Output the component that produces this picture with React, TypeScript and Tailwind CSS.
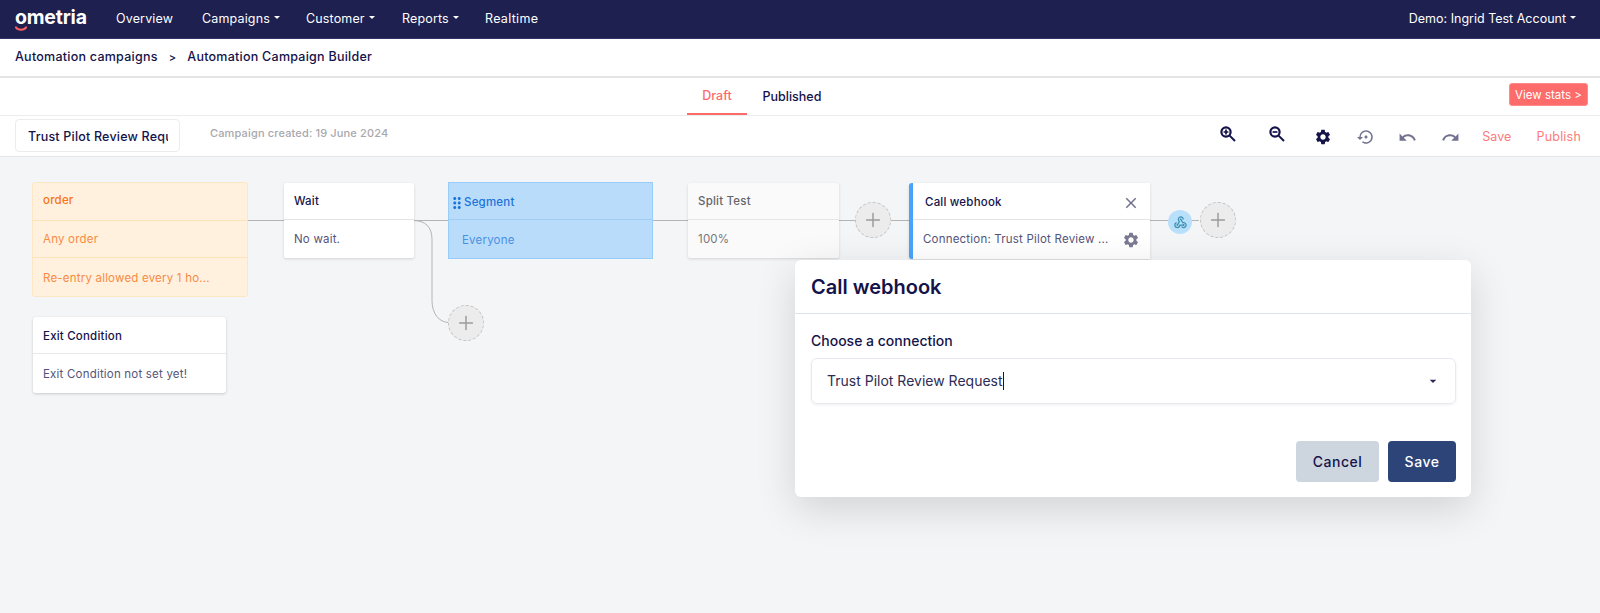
import React from "react";
import { MdSettings, MdSettingsBackupRestore, MdUndo, MdRedo, MdClose, MdWebhook, MdDragIndicator, MdArrowDropDown } from "react-icons/md";
import { Plus } from "lucide-react";

const Caret = () => <span className="inline-block ml-[4px] mb-[3px] w-0 h-0 border-x-[3px] border-x-transparent border-t-[3px] border-t-white align-middle" />;

const AddBtn = ({ className }: { className: string }) => (
  <div className={`absolute w-[36px] h-[36px] rounded-full bg-[#ececec] border border-dashed border-[#c4c4c4] flex items-center justify-center text-[#9a9a9a] ${className}`}>
    <Plus size={22} strokeWidth={1.6} />
  </div>
);

const Magnifier = ({ plus, className }: { plus: boolean; className: string }) => (
  <svg className={className} width="16" height="16" viewBox="0 0 16 16" fill="none" stroke="currentColor">
    <circle cx="6" cy="6" r="4.6" strokeWidth="2.2" />
    <path d="M9.6 9.6 15 15" strokeWidth="2" />
    <path d={plus ? "M3.6 6h4.8M6 3.6v4.8" : "M3.6 6h4.8"} strokeWidth="1.7" />
  </svg>
);

export default function App() {
  return (
    <div className="w-[1600px] h-[613px] flex flex-col overflow-hidden bg-[#f4f5f7] font-['Inter',sans-serif] text-[#14134a]">
      <nav className="h-[39px] shrink-0 bg-[#1e2050] border-b border-[#34356a] flex items-center pl-[15px] pr-[24px] text-white text-[12.5px] tracking-[0.15px]">
        <div className="relative w-[71px] mr-[30px] mb-[2px] text-[19.5px] leading-none font-bold tracking-[-0.2px]">
          ometria
          <svg className="absolute left-0 top-[18px]" width="12" height="6" viewBox="0 0 12 6"><path d="M1 1.5c2 3 8 3 10 0" fill="none" stroke="#ff5f5f" strokeWidth="2.2" strokeLinecap="round" /></svg>
        </div>
        <span className="w-[86px]">Overview</span>
        <span className="w-[104px]">Campaigns<Caret /></span>
        <span className="w-[96px]">Customer<Caret /></span>
        <span className="w-[83px]">Reports<Caret /></span>
        <span className="tracking-[0.3px]">Realtime</span>
        <span className="ml-auto tracking-normal">Demo: Ingrid Test Account<Caret /></span>
      </nav>
      <div className="h-[39px] shrink-0 bg-white border-b-2 border-[#e4e4e7] flex items-center pl-[15px] text-[12.5px] font-medium tracking-[0.25px]">
        <span>Automation campaigns</span>
        <span className="mx-[11px] text-[11px]">&gt;</span>
        <span>Automation Campaign Builder</span>
      </div>
      <div className="relative h-[38px] shrink-0 bg-white border-b border-[#ececec] flex text-[12.5px] font-medium">
        <div className="ml-[687px] flex">
          <div className="w-[60px] pt-[1px] flex items-center justify-center text-[#fb6b6b] border-b-2 border-[#fb6b6b]">Draft</div>
          <div className="w-[90px] pt-[1px] flex items-center justify-center">Published</div>
        </div>
        <button className="absolute right-[12px] top-[5px] w-[79px] h-[23px] rounded-[3px] bg-[#fd6b6b] border border-[#ff8a8a] text-white text-[11.5px] font-normal pt-[2px]">View stats &gt;</button>
      </div>
      <div className="h-[41px] shrink-0 bg-white border-b border-[#e6e6e6] flex items-center pl-[15px] pr-[19px]">
        <input readOnly value="Trust Pilot Review Request" className="w-[165px] h-[33px] mb-[2px] rounded-[4px] border border-[#ececf0] pl-[12px] pr-[11px] pt-[3px] text-[12.5px] font-medium tracking-[0.2px] outline-none" />
        <span className="ml-[30px] mb-[6px] text-[11px] text-[#a8a8ad] font-medium tracking-[0.15px]">Campaign created: 19 June 2024</span>
        <div className="ml-auto pt-[2px] flex items-center text-[#14134a]">
          <Magnifier plus className="mb-[6px]" />
          <Magnifier plus={false} className="ml-[33px] mb-[6px]" />
          <MdSettings size={18} className="ml-[29px]" />
          <MdSettingsBackupRestore size={18} className="ml-[25px] text-[#72718f]" />
          <MdUndo size={19} className="ml-[23px] text-[#72718f]" />
          <MdRedo size={19} className="ml-[24px] text-[#72718f]" />
          <span className="ml-[22px] text-[12.5px] text-[#fd7b7b] tracking-[0.1px]">Save</span>
          <span className="ml-[25px] text-[12.5px] text-[#fd7b7b] tracking-[0.2px]">Publish</span>
        </div>
      </div>
      <main className="relative -mt-px flex-1 text-[11.5px] tracking-[0.2px]">
        <svg className="absolute inset-0" width="1600" height="457" fill="none" stroke="#b4b4b6">
          <path d="M248 64.5H1199" />
          <path d="M413 64.5c12 0 19 6 19 19v61c0 13 7 22 17 22" />
        </svg>

        <div className="absolute left-[32px] top-[26px] w-[216px] h-[115px] rounded-[3px] bg-[#fff1de] border border-[#fde6c4] flex flex-col text-[#f88a45]">
          <div className="flex-1 flex items-center pl-[10px] pb-[1px] font-medium text-[#f97316] border-b border-[#fde3b8]">order</div>
          <div className="flex-1 flex items-center pl-[10px] pt-[1px] border-b border-[#fde3b8]">Any order</div>
          <div className="flex-1 flex items-center pl-[10px] pt-[2px]">Re-entry allowed every 1 ho...</div>
        </div>

        <div className="absolute left-[33px] top-[161px] w-[193px] h-[76px] rounded-[3px] bg-white shadow-[0_1px_3px_rgba(0,0,0,0.18)] flex flex-col">
          <div className="h-[37px] flex items-center pl-[10px] pt-[3px] font-medium border-b border-[#e9e9ec]">Exit Condition</div>
          <div className="flex-1 flex items-center pl-[10px] pt-[3px] text-[#55547a]">Exit Condition not set yet!</div>
        </div>

        <div className="absolute left-[284px] top-[27px] w-[130px] h-[75px] rounded-[2px] bg-white shadow-[0_1px_3px_rgba(0,0,0,0.14)] flex flex-col">
          <div className="h-[37px] flex items-center pl-[10px] pt-[2px] font-medium border-b border-[#e4e4e7]">Wait</div>
          <div className="flex-1 flex items-center pl-[10px] pt-[2px] text-[#55547a]">No wait.</div>
        </div>

        <AddBtn className="left-[448px] top-[149px]" />

        <div className="absolute left-[448px] top-[26px] w-[205px] h-[77px] bg-[#b9dcfb] border border-[#98cdfa] flex flex-col">
          <div className="h-[37px] flex items-center pt-[3px] font-medium text-[#1a73d9] border-b border-[#a0cdf5]">
            <MdDragIndicator size={18} className="ml-[-1px] shrink-0" />
            <span className="ml-[-2px]">Segment</span>
          </div>
          <div className="flex-1 flex items-center pl-[13px] pt-[4px] text-[#4a90e2]">Everyone</div>
        </div>

        <div className="absolute left-[688px] top-[27px] w-[151px] h-[75px] rounded-[2px] bg-[#fafafa] shadow-[0_1px_3px_rgba(0,0,0,0.14)] flex flex-col text-[#77777c]">
          <div className="h-[37px] flex items-center pl-[10px] pt-[2px] font-medium text-[#66666b] border-b border-[#e6e6e8]">Split Test</div>
          <div className="flex-1 flex items-center pl-[10px] pt-[2px]">100%</div>
        </div>

        <AddBtn className="left-[855px] top-[46px]" />

        <div className="absolute left-[909px] top-[27px] w-[241px] h-[76px] rounded-l-[3px] bg-white border-l-[4px] border-[#4aa3fb] shadow-[0_1px_3px_rgba(0,0,0,0.14)] flex flex-col">
          <div className="h-[37px] flex items-center pl-[12px] pr-[10px] pt-[3px] font-medium border-b border-[#e4e4e7]">
            <span>Call webhook</span>
            <MdClose size={18} className="ml-auto text-[#72718f]" />
          </div>
          <div className="flex-1 flex items-center pl-[10px] pr-[10px] pt-[1px] text-[#55547a]">
            <span>Connection: Trust Pilot Review ...</span>
            <MdSettings size={18} className="ml-auto text-[#7a7990]" />
          </div>
        </div>

        <div className="absolute left-[1168px] top-[54px] w-[24px] h-[24px] rounded-full bg-[#b9e0fb] flex items-center justify-center text-[#3b8fb0]">
          <MdWebhook size={15} />
        </div>
        <AddBtn className="left-[1200px] top-[46px]" />

        <div className="absolute left-[795px] top-[104px] w-[676px] h-[237px] rounded-[6px] bg-white shadow-[0_12px_40px_rgba(0,0,0,0.14)] flex flex-col">
          <div className="h-[54px] flex items-center pl-[16px] text-[20px] font-semibold tracking-normal border-b border-[#dde3ea]">Call webhook</div>
          <div className="pl-[16px] pr-[15px] pt-[17px]">
            <div className="text-[14px] leading-[20px] font-medium tracking-normal">Choose a connection</div>
            <div className="mt-[7px] h-[46px] rounded-[6px] border border-[#e8eaf0] shadow-[0_1px_3px_rgba(0,0,0,0.07)] flex items-center pl-[15px] pr-[14px] text-[14px] tracking-normal text-[#2d2c55]">
              <span className="border-r border-[#14134a] leading-[18px]">Trust Pilot Review Request</span>
              <MdArrowDropDown size={16} className="ml-auto" />
            </div>
          </div>
          <div className="mt-[37px] pr-[15px] flex justify-end gap-[9px] text-[14px] font-medium tracking-[0.5px]">
            <button className="w-[83px] h-[41px] rounded-[4px] bg-[#cdd5df]">Cancel</button>
            <button className="w-[68px] h-[41px] rounded-[4px] bg-[#2c4478] text-white">Save</button>
          </div>
        </div>
      </main>
    </div>
  );
}
